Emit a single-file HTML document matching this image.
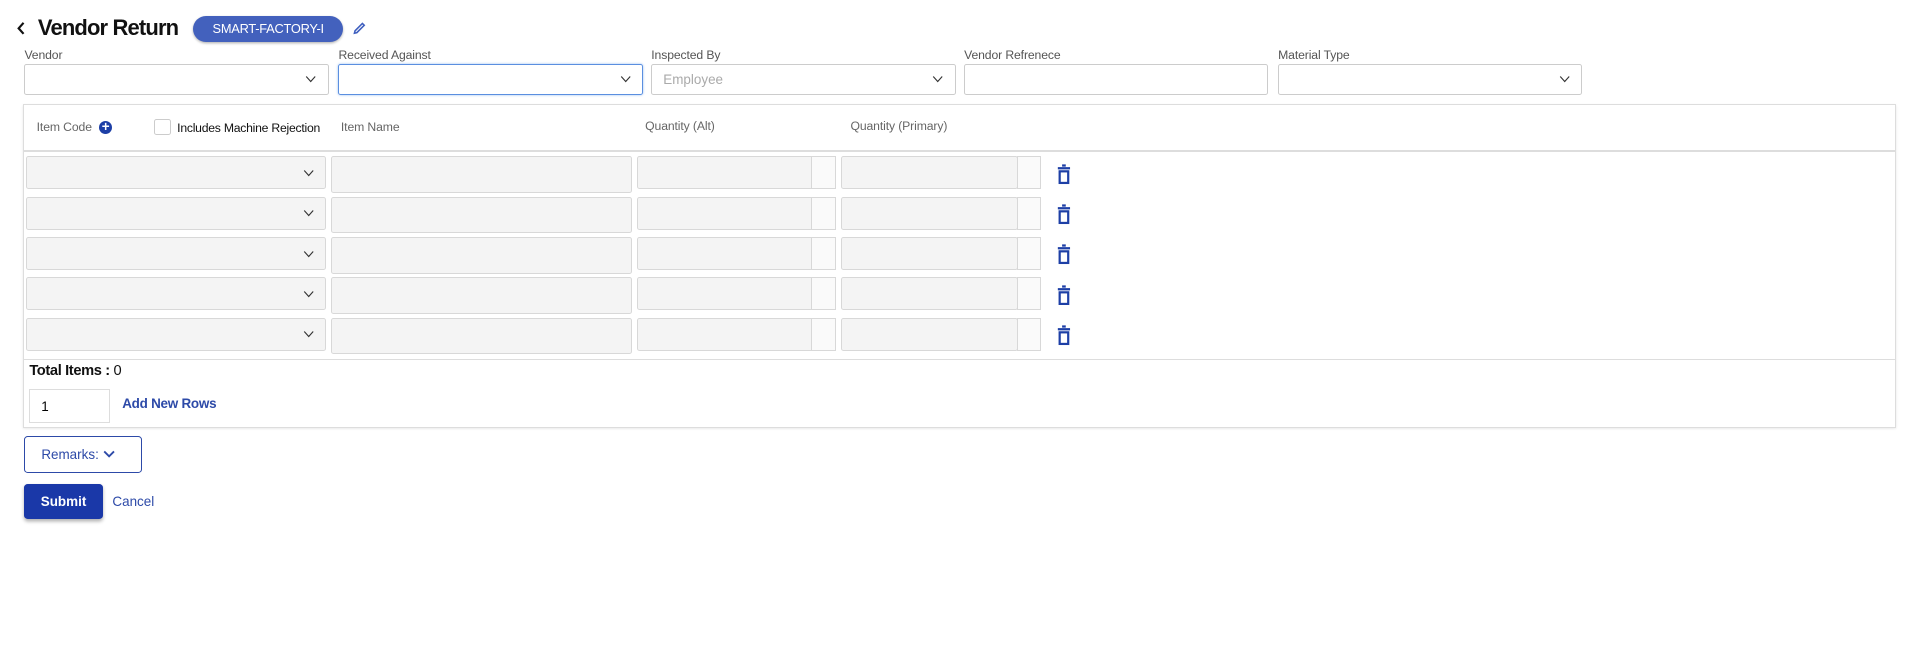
<!DOCTYPE html>
<html><head><meta charset="utf-8"><style>
html,body{margin:0;padding:0;background:#fff;}
body{width:1916px;height:651px;overflow:hidden;}
#w{zoom:1.22194;width:1568px;height:533px;position:relative;font-family:"Liberation Sans",sans-serif;}
.a{position:absolute;}
.lbl{font-size:10px;color:#555;top:39px;letter-spacing:-0.1px}
.inp{top:52px;width:249px;border:1px solid #ccc;border-radius:2px;box-sizing:border-box;height:26px;}
.chev{position:absolute;right:8px;top:6px;width:11px;height:11px;}
.gr{background:#f4f4f4;border:1px solid #d8d8d8;box-sizing:border-box;border-radius:2px;}
.hd{font-size:10px;color:#666;top:98px;letter-spacing:-0.1px}
</style></head><body><div id="w">
<svg class="a" style="left:12px;top:17px" width="10" height="12" viewBox="0 0 10 12"><path d="M7 1.5 L3 6 L7 10.5" stroke="#111" stroke-width="1.8" fill="none"/></svg>
<div class="a" style="left:31px;top:12px;font-size:18px;font-weight:bold;color:#111;letter-spacing:-0.7px">Vendor Return</div>
<div class="a" style="left:158px;top:13px;width:123px;height:21px;border-radius:11px;background:#4361bd;color:#fff;font-size:10.5px;letter-spacing:-0.2px;text-align:center;line-height:21px;box-shadow:0 1px 2px rgba(0,0,0,.3)">SMART-FACTORY-I</div>
<svg class="a" style="left:288px;top:17px" width="12" height="12" viewBox="0 0 12 12"><path d="M2 10 L2.5 8 L8.5 2 L10 3.5 L4 9.5 Z" stroke="#3f5fbf" stroke-width="1.3" fill="none"/></svg>

<div class="a lbl" style="left:20px">Vendor</div>
<div class="a lbl" style="left:277px">Received Against</div>
<div class="a lbl" style="left:533px">Inspected By</div>
<div class="a lbl" style="left:789px">Vendor Refrenece</div>
<div class="a lbl" style="left:1046px">Material Type</div>

<div class="a inp" style="left:20px"><svg class="chev" viewBox="0 0 12 12"><path d="M2 4 L6 8.5 L10 4" stroke="#333" fill="none" stroke-width="1"/></svg></div>
<div class="a inp" style="left:277px;border-color:#5b8fe0;box-shadow:0 0 2px #9cc0f0"><svg class="chev" viewBox="0 0 12 12"><path d="M2 4 L6 8.5 L10 4" stroke="#333" fill="none" stroke-width="1"/></svg></div>
<div class="a inp" style="left:533px"><span class="a" style="left:9px;top:6px;font-size:11px;color:#aaa">Employee</span><svg class="chev" viewBox="0 0 12 12"><path d="M2 4 L6 8.5 L10 4" stroke="#333" fill="none" stroke-width="1"/></svg></div>
<div class="a inp" style="left:789px"></div>
<div class="a inp" style="left:1046px"><svg class="chev" viewBox="0 0 12 12"><path d="M2 4 L6 8.5 L10 4" stroke="#333" fill="none" stroke-width="1"/></svg></div>

<div class="a" style="left:19px;top:85px;width:1533px;height:265px;border:1px solid #ddd;box-sizing:border-box;box-shadow:0 1px 2px rgba(0,0,0,.1)"></div>
<div class="a" style="left:20px;top:123px;width:1531px;height:1px;background:#ddd"></div>
<div class="a" style="left:20px;top:294px;width:1531px;height:1px;background:#ddd"></div>

<div class="a hd" style="left:30px">Item Code</div>
<div class="a" style="left:81px;top:99px;width:11px;height:11px;border-radius:50%;background:#1d3fa6;color:#fff;font-size:11px;line-height:10px;text-align:center;font-weight:bold">+</div>
<div class="a" style="left:126px;top:97px;width:12px;height:12px;border:1px solid #ccc;border-radius:2px"></div>
<div class="a" style="left:145px;top:99px;font-size:10px;color:#111;letter-spacing:-0.2px">Includes Machine Rejection</div>
<div class="a hd" style="left:279px">Item Name</div>
<div class="a hd" style="left:528px;top:97px">Quantity (Alt)</div>
<div class="a hd" style="left:696px;top:97px">Quantity (Primary)</div>

<div id="rows"></div>

<div class="a" style="left:24px;top:297px;font-size:12px;font-weight:bold;color:#111;letter-spacing:-0.3px">Total Items : <span style="font-weight:normal">0</span></div>
<div class="a" style="left:24px;top:318px;width:66px;height:28px;border:1px solid #ddd;box-sizing:border-box;font-size:11px;padding:8px 0 0 9px">1</div>
<div class="a" style="left:100px;top:324px;font-size:11px;font-weight:bold;color:#2d4aa8;letter-spacing:-0.2px">Add New Rows</div>

<div class="a" style="left:20px;top:357px;width:96px;height:30px;border:1px solid #2d4aa8;border-radius:3px;box-sizing:border-box;font-size:11px;color:#2d4aa8;padding:8px 0 0 13px">Remarks: <svg width="10" height="8" viewBox="0 0 10 8"><path d="M1 2 L5 6 L9 2" stroke="#2d4aa8" stroke-width="1.5" fill="none"/></svg></div>
<div class="a" style="left:20px;top:396px;width:64px;height:29px;background:#1a38a8;border-radius:3px;color:#fff;font-size:11px;font-weight:bold;text-align:center;line-height:29px;box-shadow:0 2px 3px rgba(0,0,0,.3)">Submit</div>
<div class="a" style="left:92px;top:404px;font-size:11px;color:#2d4aa8">Cancel</div>

<script>
var h='';for(var i=0;i<5;i++){var y=128+i*33;
h+='<div class="a gr" style="left:21px;top:'+y+'px;width:246px;height:27px"><svg class="chev" style="top:7px" viewBox="0 0 12 12"><path d="M2 4 L6 8.5 L10 4" stroke="#333" fill="none" stroke-width="1"/></svg></div>';
h+='<div class="a gr" style="left:271px;top:'+y+'px;width:246px;height:30px"></div>';
h+='<div class="a gr" style="left:521px;top:'+y+'px;width:144px;height:27px"></div><div class="a" style="left:664px;top:'+y+'px;width:20px;height:27px;border:1px solid #d8d8d8;box-sizing:border-box;background:#fafafa"></div>';
h+='<div class="a gr" style="left:688px;top:'+y+'px;width:145px;height:27px"></div><div class="a" style="left:832px;top:'+y+'px;width:20px;height:27px;border:1px solid #d8d8d8;box-sizing:border-box;background:#fafafa"></div>';
h+='<svg class="a" style="left:864px;top:'+(y+6)+'px" width="13" height="17" viewBox="0 0 13 17"><path d="M5 1.2 H8 M1.5 3.5 H11.5" stroke="#1d3fa6" stroke-width="1.8"/><rect x="3" y="6" width="7" height="9.5" stroke="#1d3fa6" stroke-width="1.8" fill="none"/></svg>';}
document.getElementById('rows').innerHTML=h;
</script>
</div></body></html>
